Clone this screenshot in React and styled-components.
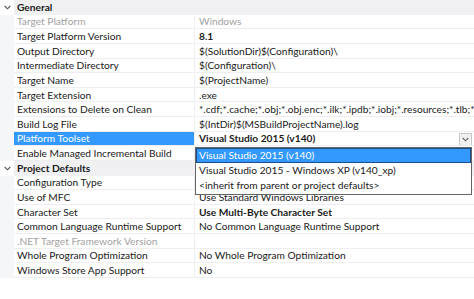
import React from 'react'
import styled, { createGlobalStyle } from 'styled-components'

const Global = createGlobalStyle`
  html, body { margin: 0; padding: 0; background: #fff; }
  body { font-family: Lato, "Noto Sans", sans-serif; }
`

const ROW = 14.63

const Grid = styled.div`
  position: relative;
  width: 474px;
  height: 299px;
  overflow: hidden;
  background: #fff;
  font-size: 10.2px;
  color: #1a1a1a;
`

const Row = styled.div`
  display: flex;
  height: ${ROW}px;
  align-items: stretch;
  background: ${p => (p.$header ? '#f0f0f2' : '#fff')};
`

const Gutter = styled.div`
  width: 14px;
  flex: none;
  background: ${p => (p.$header ? '#fff' : '#f5f6f8')};
  display: flex;
  align-items: center;
  justify-content: center;
`

const Name = styled.div`
  width: 181px;
  flex: none;
  padding-left: 3px;
  display: flex;
  align-items: center;
  white-space: nowrap;
  overflow: hidden;
  border-bottom: 1px solid #eeeef0;
  border-right: 1px solid #eeeef0;
  box-sizing: border-box;
  background: ${p => (p.$selected ? '#3399ff' : 'transparent')};
  color: ${p => (p.$selected ? '#fff' : p.$disabled ? '#a2a2a2' : 'inherit')};
`

const Value = styled.div`
  flex: 1;
  min-width: 0;
  padding-left: 4px;
  display: flex;
  align-items: center;
  white-space: nowrap;
  overflow: hidden;
  border-bottom: 1px solid #eeeef0;
  box-sizing: border-box;
  font-weight: ${p => (p.$bold ? 700 : 400)};
  color: ${p => (p.$disabled ? '#a2a2a2' : 'inherit')};
  position: relative;
`

const Header = styled.div`
  flex: 1;
  padding-left: 3px;
  display: flex;
  align-items: center;
  font-weight: 700;
`

const DropButton = styled.div`
  position: absolute;
  right: 2px;
  top: 1px;
  width: 11px;
  height: 12px;
  border: 1px solid #c8c8c8;
  background: #f0f0f0;
  display: flex;
  align-items: center;
  justify-content: center;
`

const List = styled.div`
  position: absolute;
  left: 195px;
  top: 147px;
  width: 277px;
  border: 1px solid #646464;
  background: #fff;
  box-sizing: border-box;
  padding-bottom: 2px;
`

const Option = styled.div`
  height: ${ROW}px;
  display: flex;
  align-items: center;
  padding-left: 2px;
  white-space: nowrap;
  box-sizing: border-box;
  background: ${p => (p.$active ? '#3399ff' : '#fff')};
  color: ${p => (p.$active ? '#fff' : '#1a1a1a')};
  border: 1px solid ${p => (p.$active ? '#1c4f8c' : 'transparent')};
`

const Chevron = ({ color = '#555' }) => (
  <svg width="7" height="5" viewBox="0 0 7 5">
    <polyline points="0.7,1 3.5,3.8 6.3,1" fill="none" stroke={color} strokeWidth="1.1" />
  </svg>
)

const rows = [
  { header: 'General' },
  { name: 'Target Platform', value: 'Windows', disabled: true },
  { name: 'Target Platform Version', value: '8.1', bold: true },
  { name: 'Output Directory', value: '$(SolutionDir)$(Configuration)\\' },
  { name: 'Intermediate Directory', value: '$(Configuration)\\' },
  { name: 'Target Name', value: '$(ProjectName)' },
  { name: 'Target Extension', value: '.exe' },
  {
    name: 'Extensions to Delete on Clean',
    value: '*.cdf;*.cache;*.obj;*.obj.enc;*.ilk;*.ipdb;*.iobj;*.resources;*.tlb;*.tli;*.tlh;*.tmp;*.rsp;*.pgc;*.pgd'
  },
  { name: 'Build Log File', value: '$(IntDir)$(MSBuildProjectName).log' },
  { name: 'Platform Toolset', value: 'Visual Studio 2015 (v140)', bold: true, selected: true },
  { name: 'Enable Managed Incremental Build', value: '' },
  { header: 'Project Defaults' },
  { name: 'Configuration Type', value: '' },
  { name: 'Use of MFC', value: 'Use Standard Windows Libraries' },
  { name: 'Character Set', value: 'Use Multi-Byte Character Set', bold: true },
  { name: 'Common Language Runtime Support', value: 'No Common Language Runtime Support' },
  { name: '.NET Target Framework Version', value: '', disabled: true },
  { name: 'Whole Program Optimization', value: 'No Whole Program Optimization' },
  { name: 'Windows Store App Support', value: 'No' }
]

const options = [
  'Visual Studio 2015 (v140)',
  'Visual Studio 2015 - Windows XP (v140_xp)',
  '<inherit from parent or project defaults>'
]

export default function App() {
  return (
    <>
      <Global />
      <Grid>
        {rows.map((r, i) =>
          r.header ? (
            <Row key={i} $header>
              <Gutter $header>
                <Chevron />
              </Gutter>
              <Header>{r.header}</Header>
            </Row>
          ) : (
            <Row key={i}>
              <Gutter />
              <Name $selected={r.selected} $disabled={r.disabled}>{r.name}</Name>
              <Value $bold={r.bold} $disabled={r.disabled}>
                {r.value}
                {r.selected && (
                  <DropButton>
                    <Chevron color="#666" />
                  </DropButton>
                )}
              </Value>
            </Row>
          )
        )}
        <List>
          {options.map((o, i) => (
            <Option key={o} $active={i === 0}>{o}</Option>
          ))}
        </List>
      </Grid>
    </>
  )
}
